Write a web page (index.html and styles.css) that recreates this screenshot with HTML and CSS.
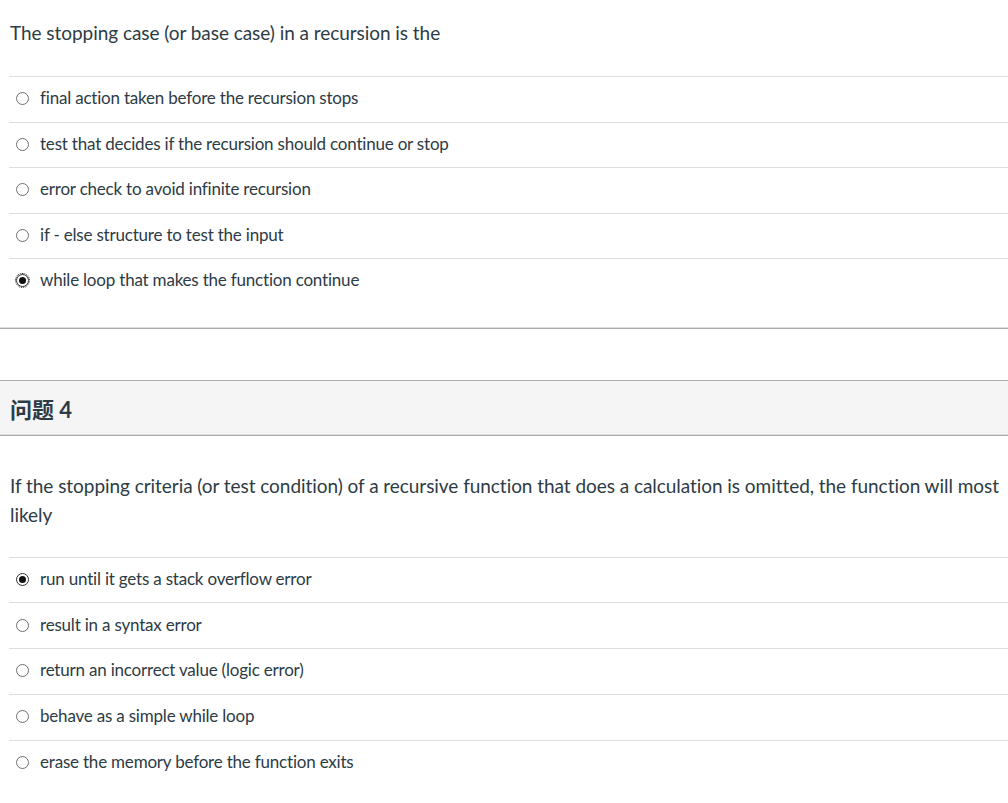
FILE: index.html
```html
<!DOCTYPE html>
<html>
<head>
<meta charset="utf-8">
<link rel="stylesheet" href="styles.css">
</head>
<body>
<div class="question">
  <div class="q-text">The stopping case (or base case) in a recursion is the</div>
  <div class="answers">
    <label class="answer"><input type="radio" name="q3" class="radio"><span>final action taken before the recursion stops</span></label>
    <label class="answer"><input type="radio" name="q3" class="radio"><span>test that decides if the recursion should continue or stop</span></label>
    <label class="answer"><input type="radio" name="q3" class="radio"><span>error check to avoid infinite recursion</span></label>
    <label class="answer"><input type="radio" name="q3" class="radio"><span>if - else structure to test the input</span></label>
    <label class="answer"><input type="radio" name="q3" class="radio focused" checked><span>while loop that makes the function continue</span></label>
  </div>
  <div class="q-end"></div>
</div>

<div class="q-header"><span class="cjk">问题</span> 4</div>

<div class="question question-body">
  <div class="q-text">If the stopping criteria (or test condition) of a recursive function that does a calculation is omitted, the function will most likely</div>
  <div class="answers">
    <label class="answer"><input type="radio" name="q4" class="radio" checked><span>run until it gets a stack overflow error</span></label>
    <label class="answer"><input type="radio" name="q4" class="radio"><span>result in a syntax error</span></label>
    <label class="answer"><input type="radio" name="q4" class="radio"><span>return an incorrect value (logic error)</span></label>
    <label class="answer"><input type="radio" name="q4" class="radio"><span>behave as a simple while loop</span></label>
    <label class="answer"><input type="radio" name="q4" class="radio"><span>erase the memory before the function exits</span></label>
  </div>
</div>
</body>
</html>
```
FILE: styles.css
```css
html, body {
  margin: 0;
  padding: 0;
  background: #ffffff;
}
body {
  font-family: Lato, "Noto Sans CJK SC", sans-serif;
  color: #2d3b45;
  width: 1008px;
  overflow: hidden;
}
.q-text {
  font-size: 19px;
  line-height: 29px;
  letter-spacing: -0.05px;
  padding: 18px 0 0 10px;
  margin-bottom: 29px;
}
.question-body {
  padding-top: 17px;
}
.question-body .q-text {
  margin-bottom: 28px;
}
.answers {
  margin-left: 9px;
}
.answer {
  display: flex;
  align-items: center;
  height: 45.5px;
  box-sizing: border-box;
  border-top: 1px solid #dcdfe2;
  padding-bottom: 3px;
  font-size: 17px;
  letter-spacing: -0.2px;
}
.question-body .answer {
  height: 45.75px;
}
.radio {
  appearance: none;
  -webkit-appearance: none;
  width: 13px;
  height: 13px;
  margin: 2px 11px 0 7px;
  border: 1px solid #6f6f6f;
  border-radius: 50%;
  box-sizing: border-box;
  background: #fff;
  position: relative;
  flex: none;
}
.radio:checked {
  border-color: #333;
}
.radio:checked::after {
  content: "";
  position: absolute;
  left: 2px;
  top: 2px;
  width: 7px;
  height: 7px;
  border-radius: 50%;
  background: #111;
}
.radio.focused {
  outline: 1px dotted #222;
  outline-offset: 0px;
}
.q-end {
  margin-top: 23px;
  border-top: 1px solid #dedede;
  border-bottom: 1px solid #aaaaaa;
  margin-bottom: 51px;
}
.q-header {
  background: #f5f5f5;
  border-top: 1px solid #aaaaaa;
  border-bottom: 1px solid #aaaaaa;
  box-shadow: inset 0 -1px 0 #dddddd;
  height: 54px;
  line-height: 54px;
  padding-left: 10px;
  font-size: 22px;
  font-weight: bold;
  color: #2d3b45;
}
.cjk {
  font-family: "Noto Sans CJK SC", sans-serif;
}
```
